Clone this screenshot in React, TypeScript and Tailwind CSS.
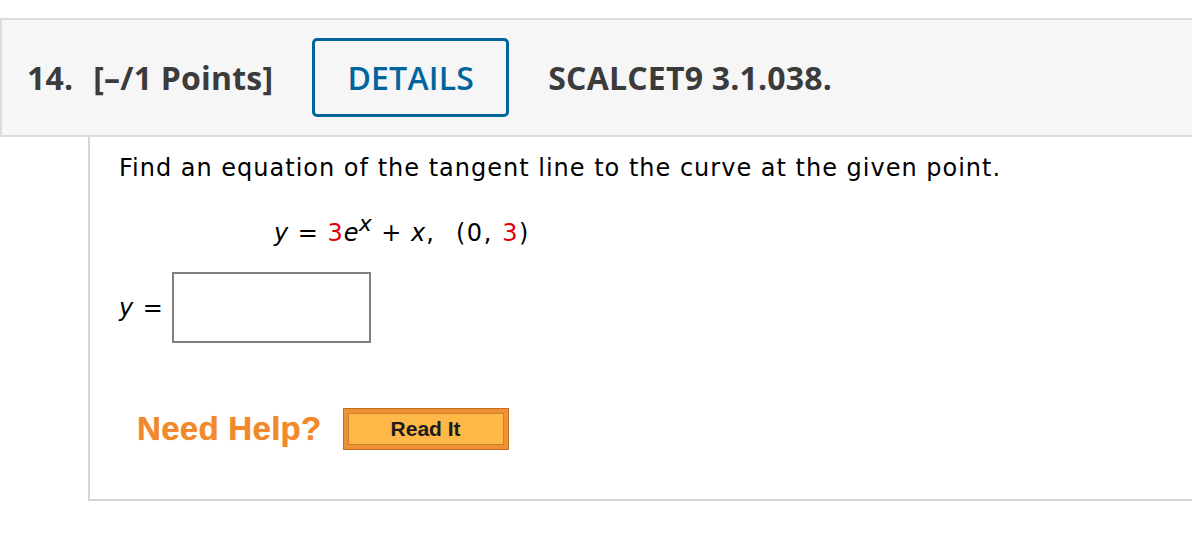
export default function App() {
  return (
    <div className="w-[1192px] h-[546px] bg-white overflow-hidden pt-[18px]">
      {/* Question header */}
      <div className="flex items-center h-[119px] bg-[#f6f6f6] border-2 border-r-0 border-[#dcdcdc] pl-[25px] font-['Open_Sans',sans-serif] text-[#3b3b3b] text-[32px] tracking-[0.2px]">
        <span className="font-bold">14.</span>
        <span className="ml-[20px] font-bold">[–/1 Points]</span>
        <div className="ml-[39px] w-[197px] h-[79px] flex items-center justify-center border-[3px] border-[#00659c] rounded-[5px] text-[#00659c] font-semibold">
          DETAILS
        </div>
        <span className="ml-[39px] font-bold">SCALCET9 3.1.038.</span>
      </div>

      {/* Question body */}
      <div className="ml-[88px] h-[364px] border-l-2 border-b-2 border-[#d6d6d6] pl-[29px] pt-[17px] font-['DejaVu_Sans',Verdana,sans-serif] text-black text-[24px] tracking-[1px]">
        <p className="leading-[28px]">
          Find an equation of the tangent line to the curve at the given point.
        </p>
        <p className="mt-[37px] ml-[155px] leading-[28px] whitespace-pre">
          <i>y</i> = <span className="text-[#e0000b]">3</span><i className="tracking-normal">e</i>
          <sup className="text-[22px] -top-[10px] italic">x</sup> + <i>x</i>,
          <span className="ml-[21px] tracking-[1.6px]">
            (0, <span className="text-[#e0000b]">3</span>)
          </span>
        </p>
        <div className="mt-[25px] flex items-center">
          <span>
            <i>y</i> =
          </span>
          <div className="ml-[8px] w-[199px] h-[71px] border-2 border-[#808080] bg-white" />
        </div>
        <div className="mt-[61px] ml-[18px] flex items-center tracking-normal">
          <span className="font-['Liberation_Sans',Arial,sans-serif] font-bold text-[33px] tracking-[0.3px] text-[#f1892c] [text-shadow:0_0_1px_#f5a45c]">
            Need Help?
          </span>
          <div className="ml-[21px] w-[166px] h-[42px] bg-[#ee9034] border border-[#c46d20] p-[4px]">
            <div className="h-full border border-[#c98326] bg-[#fdb848] flex items-center justify-center font-['Liberation_Sans',Arial,sans-serif] font-bold text-[21px] text-[#1c1c1c]">
              Read It
            </div>
          </div>
        </div>
      </div>
    </div>
  );
}
